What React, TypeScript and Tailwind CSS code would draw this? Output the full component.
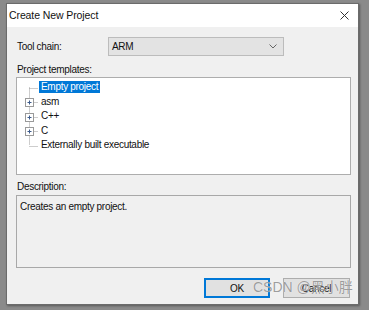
import React from "react";

const UI = { fontFamily: '"Liberation Sans", Arial, sans-serif' };

function TreeLines() {
  const centers = [9.5, 24, 38.5, 53, 67.5];
  return (
    <svg width="22" height="76" className="shrink-0">
      <line x1="12.5" y1={centers[0]} x2="12.5" y2={centers[4]} stroke="#9a9a9a" strokeDasharray="1 1" />
      {centers.map((c, i) => (
        <line key={i} x1="12.5" y1={Math.round(c) + 0.5} x2="21" y2={Math.round(c) + 0.5} stroke="#9a9a9a" strokeDasharray="1 1" />
      ))}
      {[1, 2, 3].map((i) => {
        const c = Math.round(centers[i]) + 0.5;
        return (
          <g key={i}>
            <rect x="8.5" y={c - 4} width="8" height="8" fill="#fff" stroke="#9a9a9a" />
            <line x1="10.5" y1={c} x2="14.5" y2={c} stroke="#3c5a8a" />
            <line x1="12.5" y1={c - 2} x2="12.5" y2={c + 2} stroke="#3c5a8a" />
          </g>
        );
      })}
    </svg>
  );
}

export default function App() {
  const rows = ["Empty project", "asm", "C++", "C", "Externally built executable"];
  return (
    <div className="w-[369px] h-[310px] bg-[#8a8a8a] pt-[3px] pl-[6px] overflow-hidden relative" style={UI}>
      <div className="w-[353px] h-[302px] border border-[#6b6b6b] bg-[#f0f0f0] flex flex-col shadow-[1px_1px_2px_rgba(0,0,0,0.35)]">
        {/* title bar */}
        <div className="h-[23px] bg-white flex items-center justify-between pl-[2px] pr-[9px]">
          <span className="text-[10.5px] text-[#111] tracking-[-0.1px]">Create New Project</span>
          <svg width="9" height="9" viewBox="0 0 9 9">
            <path d="M0.5 0.5 L8.5 8.5 M8.5 0.5 L0.5 8.5" stroke="#333" strokeWidth="1" />
          </svg>
        </div>
        {/* body */}
        <div className="flex flex-col pl-[9px] text-[10px] tracking-[-0.3px] text-[#111]">
          <div className="flex items-center mt-[10px] h-[19px]">
            <span className="w-[92px] pl-[1px]">Tool chain:</span>
            <div className="w-[176px] h-[19px] bg-[#e3e3e3] border border-[#bcbcbc] flex items-center justify-between pl-[3px] pr-[6px]">
              <span>ARM</span>
              <svg width="8" height="5" viewBox="0 0 8 5">
                <path d="M0.5 0.5 L4 4 L7.5 0.5" fill="none" stroke="#666" strokeWidth="1" />
              </svg>
            </div>
          </div>
          <div className="mt-[8px] h-[12px] leading-[12px] pl-[1px]">Project templates:</div>
          <div className="mt-[1px] w-[335px] h-[98px] bg-white border border-[#adadad] flex">
            <TreeLines />
            <div className="flex flex-col pt-[2px]">
              {rows.map((r, i) => (
                <div key={r} className="h-[14.5px] flex items-center">
                  <span
                    className={
                      "h-[12px] leading-[12px] px-[2px] " +
                      (i === 0 ? "bg-[#0078d7] text-white" : "")
                    }
                  >
                    {r}
                  </span>
                </div>
              ))}
            </div>
          </div>
          <div className="mt-[6px] h-[12px] leading-[12px] pl-[1px]">Description:</div>
          <div className="mt-[2px] w-[335px] h-[73px] border border-[#a8a8a8] pl-[3px] pt-[3px]">
            Creates an empty project.
          </div>
          <div className="mt-[10px] flex justify-end w-[335px] gap-[13px] pr-[1px]">
            <div className="w-[66px] h-[20px] bg-[#e1e1e1] border-2 border-[#0078d7] flex items-center justify-center">OK</div>
            <div className="w-[67px] h-[20px] bg-[#e1e1e1] border border-[#adadad] flex items-center justify-center">Cancel</div>
          </div>
        </div>
      </div>
      <div
        className="absolute left-[253px] top-[278px] text-[14px] leading-[18px] text-[rgba(140,140,140,0.85)] whitespace-nowrap"
        style={{
          fontFamily: '"Liberation Sans", "Noto Sans CJK SC", sans-serif',
          textShadow: "0 0 1px rgba(255,255,255,0.9)",
        }}
      >
        CSDN @黑小胖
      </div>
    </div>
  );
}
